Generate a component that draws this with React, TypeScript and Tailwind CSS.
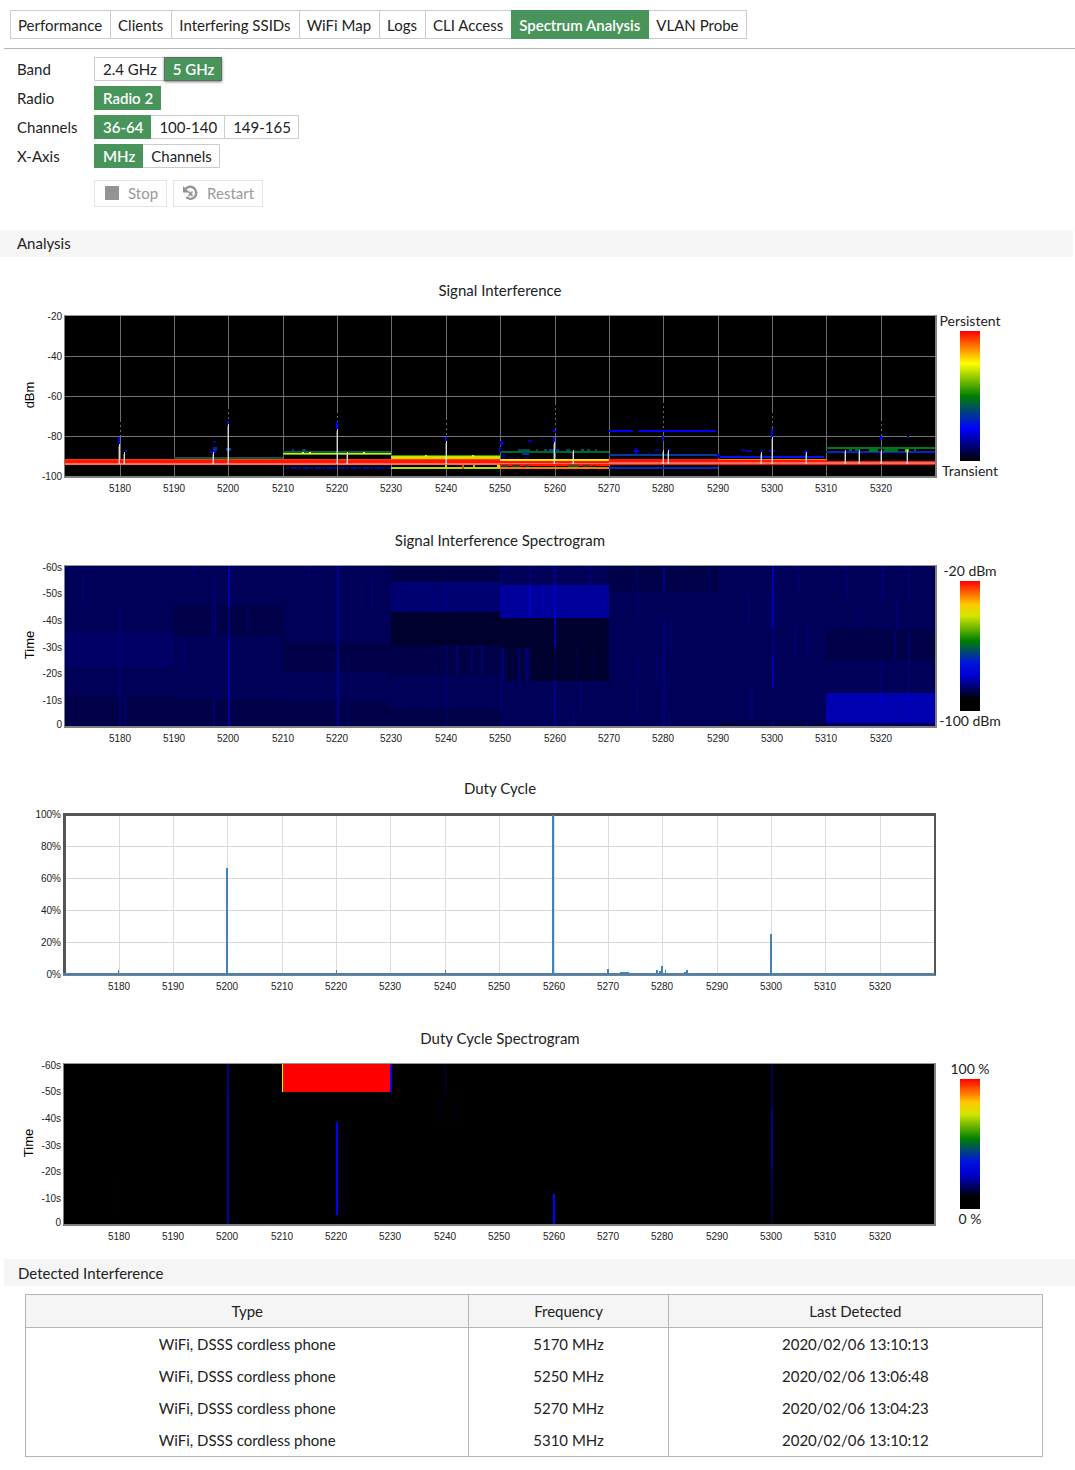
import type { ReactNode } from "react";

const FREQS = [5180, 5190, 5200, 5210, 5220, 5230, 5240, 5250, 5260, 5270, 5280, 5290, 5300, 5310, 5320];
const LEFT = 65;
const RIGHT = 935;
const xOf = (mhz: number) => Math.round(119.5 + (mhz - 5180) * 5.4375);

/* x, y, width, height, colour */
type Block = [number, number, number, number, string];

const Blocks = ({ data }: { data: Block[] }) => (
  <>
    {data.map(([x, y, w, h, fill], i) => (
      <rect key={i} x={x} y={y} width={w} height={h} fill={fill} />
    ))}
  </>
);

const TIMES: [string, number][] = [
  ["-60s", 17], ["-50s", 43], ["-40s", 70], ["-30s", 97], ["-20s", 123], ["-10s", 150], ["0", 174],
];

/* ---------- Signal interference ---------- */
const bands: Block[] = [
  [174, 156, 109, 2, "#0a5a4c"],
  [65, 158, 870, 1, "#ff3c00"],
  [65, 159, 762, 4, "#ff1500"],
  [65, 162, 435, 2, "#ff6a5a"],
  [283, 150, 108, 2, "#00605a"],
  [283, 152, 108, 2, "#c8f000"],
  [283, 153, 108, 1, "#78a000"],
  [391, 154, 109, 2, "#3c8c00"],
  [391, 155, 109, 3, "#d2dc00"],
  [391, 166, 109, 2, "#b4dc00"],
  [500, 150, 109, 2, "#00643c"],
  [500, 158, 109, 2, "#ffe600"],
  [500, 160, 109, 2, "#ff1500"],
  [500, 162, 109, 1, "#ff6a5a"],
  [500, 163, 109, 2, "#ff1500"],
  [500, 166, 109, 2, "#ff7800"],
  [609, 129, 24, 2, "#0000ff"],
  [638, 129, 78, 2, "#0000ff"],
  [609, 153, 109, 2, "#003c9c"],
  [609, 158, 109, 3, "#ff1000"],
  [609, 161, 109, 2, "#ff6a5a"],
  [609, 163, 109, 1, "#ff1500"],
  [609, 166, 109, 2, "#0028c8"],
  [718, 155, 106, 2, "#0014ff"],
  [718, 158, 109, 1, "#ff7800"],
  [718, 161, 109, 2, "#ff6a5a"],
  [718, 163, 109, 1, "#ff1500"],
  [826, 146, 109, 2, "#007818"],
  [826, 150, 109, 2, "#0028c8"],
  [827, 158, 109, 2, "#000000"],
  [827, 160, 109, 1, "#ff1500"],
  [827, 161, 109, 2, "#ff6a5a"],
  [827, 163, 109, 1, "#ff1500"],
];

/* x, top of the white part, top of the blue part */
const spikes: [number, number, number][] = [
  [119, 143, 136], [124, 151, 151], [213, 151, 151], [228, 123, 120], [337, 128, 121],
  [347, 151, 151], [446, 140, 136], [554, 141, 136], [573, 149, 149], [663, 149, 149],
  [668, 149, 149], [761, 151, 151], [772, 136, 128], [806, 151, 149], [845, 149, 149],
  [859, 149, 149], [881, 149, 149], [907, 149, 149],
];

/* x, y, height of the faint transient dots over the grid */
const traces: [number, number, number][] = [
  [120, 121, 15], [228, 108, 12], [337, 112, 8], [446, 119, 16], [555, 104, 30],
  [663, 102, 30], [772, 112, 15], [881, 120, 14],
];

const specks: Block[] = [
  [125, 149, 2, 2, "#0000ff"], [210, 150, 6, 2, "#0000ff"], [213, 146, 4, 4, "#0028b4"],
  [213, 140, 3, 2, "#0000c8"], [226, 147, 5, 3, "#003cb4"], [292, 148, 2, 2, "#003c96"],
  [302, 148, 4, 2, "#004678"], [302, 151, 2, 2, "#ffff00"], [309, 151, 2, 2, "#ffff00"],
  [363, 151, 2, 2, "#ffff00"], [425, 154, 2, 2, "#ffe600"], [472, 154, 2, 2, "#ffe600"],
  [445, 164, 2, 3, "#d2dc00"], [462, 164, 2, 4, "#c86400"], [473, 164, 2, 3, "#d2b400"],
  [497, 164, 3, 3, "#d2dc00"], [500, 140, 3, 4, "#0000ff"], [499, 146, 2, 5, "#0000c8"],
  [502, 153, 3, 5, "#0000a0"], [509, 156, 5, 2, "#000096"], [516, 156, 4, 2, "#0000a0"],
  [522, 151, 7, 3, "#003c78"], [524, 156, 5, 2, "#000096"], [518, 148, 12, 2, "#004a50"],
  [528, 139, 4, 2, "#0000b4"], [536, 148, 2, 2, "#004a50"], [544, 148, 3, 2, "#004a50"],
  [553, 129, 3, 2, "#0000ff"], [549, 148, 10, 2, "#003c96"], [566, 148, 4, 2, "#004a50"],
  [581, 148, 3, 2, "#006432"], [587, 148, 3, 2, "#004a50"], [595, 148, 2, 2, "#004a50"],
  [502, 164, 6, 2, "#004a78"], [512, 164, 8, 2, "#004a50"], [525, 164, 4, 2, "#00508c"],
  [568, 164, 11, 2, "#006432"], [583, 164, 6, 2, "#004a50"], [593, 164, 2, 2, "#004a50"],
  [634, 149, 5, 2, "#0000ff"], [635, 147, 2, 6, "#0000e0"], [648, 151, 2, 2, "#000096"],
  [655, 148, 4, 2, "#000096"], [662, 135, 2, 5, "#0000ff"], [668, 148, 3, 2, "#0000c8"],
  [717, 153, 3, 4, "#0000b4"], [741, 148, 4, 2, "#0000c8"], [746, 149, 6, 2, "#0000a0"],
  [760, 149, 3, 2, "#0000c8"], [769, 149, 6, 2, "#0000c8"], [804, 151, 3, 2, "#0000ff"],
  [880, 135, 2, 4, "#0000ff"], [907, 135, 2, 2, "#0000c8"], [869, 148, 9, 3, "#007828"],
  [884, 148, 14, 3, "#006e28"], [905, 148, 4, 3, "#5ac800"], [914, 148, 2, 2, "#006432"],
  [849, 148, 3, 2, "#006432"], [855, 148, 5, 2, "#006432"],
];

/* ---------- Signal spectrogram ---------- */
const DIM = "#000049";
const LIT = "#00006e";
const DARK = "#00002e";
const signalBlocks: Block[] = [
  [LEFT, 15, 870, 160, "#000058"],
  [65, 82, 109, 33, "#000066"], [65, 145, 109, 30, DIM], [174, 55, 109, 30, DIM],
  [174, 148, 109, 27, DIM], [283, 91, 108, 30, DIM], [283, 151, 108, 24, DIM],
  [391, 15, 109, 16, DIM], [391, 31, 109, 30, "#000072"], [391, 61, 109, 33, DARK],
  [391, 94, 109, 30, DIM], [391, 157, 109, 18, DIM], [500, 34, 109, 33, "#00009c"],
  [500, 67, 109, 30, DARK], [531, 97, 78, 33, DARK], [500, 97, 31, 33, "#000044"],
  [609, 15, 109, 25, DIM], [826, 79, 109, 30, DIM], [718, 170, 108, 5, DIM],
  [826, 142, 109, 30, "#0000b0"],
  [82, 19, 2, 33, LIT], [119, 52, 2, 123, "#000074"], [124, 145, 2, 30, LIT],
  [192, 15, 2, 10, LIT], [213, 25, 3, 30, LIT], [211, 55, 4, 30, "#000062"],
  [215, 55, 1, 30, "#000090"], [213, 85, 2, 60, "#000060"], [213, 148, 2, 27, LIT],
  [247, 55, 2, 30, "#000060"], [184, 85, 2, 33, "#000068"], [228, 15, 2, 40, "#0000b4"],
  [228, 55, 2, 30, "#000080"], [228, 85, 2, 90, "#0000a8"], [308, 15, 2, 13, LIT],
  [337, 15, 2, 160, "#000092"], [361, 28, 1, 29, LIT], [371, 28, 2, 30, "#000078"],
  [347, 151, 2, 24, "#000060"], [446, 31, 1, 30, "#000094"], [446, 94, 1, 81, "#000078"],
  [456, 94, 2, 30, LIT], [471, 94, 2, 30, LIT], [481, 94, 2, 30, LIT],
  [500, 15, 2, 19, LIT], [500, 130, 2, 30, LIT], [529, 15, 2, 19, LIT],
  [529, 34, 2, 33, "#0000c4"], [542, 34, 2, 33, "#0000b0"], [554, 15, 2, 19, "#000090"],
  [554, 34, 2, 33, "#0000c0"], [554, 67, 2, 30, "#0000a8"], [554, 97, 2, 33, DIM],
  [554, 130, 2, 45, "#000094"], [501, 97, 3, 33, "#000078"], [507, 97, 4, 33, DARK],
  [514, 97, 2, 33, DARK], [518, 97, 2, 33, "#000070"], [522, 97, 2, 33, DARK],
  [525, 97, 4, 33, "#000076"], [576, 97, 2, 33, "#000040"], [593, 97, 2, 33, "#000040"],
  [590, 15, 2, 19, LIT], [580, 130, 2, 30, LIT], [573, 160, 2, 15, LIT],
  [636, 15, 2, 25, "#000060"], [638, 40, 1, 30, LIT], [638, 102, 1, 31, LIT],
  [636, 133, 2, 30, LIT], [663, 15, 2, 25, "#000090"], [663, 70, 2, 105, "#000082"],
  [670, 70, 2, 33, LIT], [656, 102, 2, 31, LIT], [668, 162, 2, 13, LIT],
  [684, 15, 1, 25, "#000060"], [708, 15, 2, 25, "#000060"], [689, 70, 1, 33, "#000064"],
  [748, 43, 2, 33, LIT], [772, 15, 2, 61, "#0000b4"], [772, 76, 2, 30, "#00007c"],
  [772, 106, 2, 30, "#0000b4"], [771, 43, 1, 33, "#000080"], [798, 15, 2, 28, LIT],
  [794, 76, 2, 30, LIT], [806, 76, 2, 30, LIT], [801, 43, 1, 33, "#000064"],
  [750, 135, 3, 34, LIT], [746, 106, 1, 30, "#000068"], [762, 170, 1, 5, LIT],
  [772, 170, 2, 5, "#000080"], [806, 170, 2, 5, LIT], [846, 15, 2, 34, LIT],
  [881, 15, 3, 34, "#000074"], [908, 15, 2, 34, LIT], [896, 49, 2, 30, LIT],
  [859, 49, 2, 30, "#000064"], [881, 49, 1, 30, "#000064"], [894, 79, 2, 30, LIT],
  [908, 79, 2, 63, LIT], [880, 109, 2, 33, LIT], [869, 109, 1, 33, "#000064"],
  [893, 109, 1, 33, "#000064"], [881, 142, 1, 30, "#0000c0"], [908, 142, 2, 30, "#0000bc"],
];

/* ---------- Duty cycle spectrogram ---------- */
const dutyBlocks: Block[] = [
  [64, 15, 871, 160, "#000000"],
  [227, 15, 2, 25, "#000080"], [227, 40, 2, 135, "#0000a8"],
  [282, 15, 1, 28, "#ffff00"], [283, 15, 107, 28, "#ff0000"], [390, 15, 2, 28, "#0000ff"],
  [336, 73, 2, 93, "#0000ff"], [445, 16, 1, 30, "#000048"], [553, 145, 2, 30, "#0000ff"],
  [438, 46, 4, 30, "#00000a"], [453, 46, 4, 30, "#00000a"], [119, 130, 1, 30, "#000010"],
  [771, 15, 2, 43, "#000050"], [771, 58, 2, 62, "#000090"], [771, 120, 2, 30, "#000060"],
  [771, 150, 2, 25, "#000040"],
];

const Frame = ({ light }: { light?: boolean }) =>
  light ? (
    <g fill="#555">
      <rect x={64} y={14} width={873} height={3} />
      <rect x={64} y={14} width={3} height={163} />
      <rect x={935} y={14} width={2} height={163} />
    </g>
  ) : (
    <g fill="#808080">
      <rect x={64} y={14} width={873} height={1} fill="#999" />
      <rect x={64} y={14} width={1} height={163} />
      <rect x={935} y={14} width={2} height={163} />
      <rect x={64} y={175} width={873} height={2} />
    </g>
  );

type ChartProps = {
  title: string;
  axis?: string;
  ticks: [string, number][];
  offset?: number;
  legend?: [string, string];
  smooth?: boolean;
  className: string;
  children: ReactNode;
};

function Chart({ title, axis, ticks, offset = 0, legend, smooth, className, children }: ChartProps) {
  return (
    <figure className={`flex ${className}`}>
      <div className="min-w-0 grow">
        <figcaption className="pb-[2px] pl-[60px] text-center text-[15px] leading-[18px]">{title}</figcaption>
        <svg viewBox="0 0 940 200" className="block w-full" role="img" aria-label={title}>
          <g shapeRendering="crispEdges">{children}</g>
          <g fontFamily="'Liberation Sans', Arial, sans-serif" fontSize={10} fill="#222">
            {ticks.map(([label, y]) => (
              <text key={label} x={62 + offset} y={y + 3} textAnchor="end">{label}</text>
            ))}
            {FREQS.map((f) => (
              <text key={f} x={xOf(f) + offset} y={191} textAnchor="middle">{f}</text>
            ))}
            {axis && (
              <text transform={`translate(${34 + offset} 94) rotate(-90)`} textAnchor="middle" fontSize={13} fill="#000">
                {axis}
              </text>
            )}
          </g>
        </svg>
      </div>
      <div className="w-[135px] shrink-0 pt-[30px]">
        {legend && (
          <div className="flex w-[60px] flex-col items-center text-sm leading-5 whitespace-nowrap">
            <span>{legend[0]}</span>
            <div
              className={
                smooth
                  ? "h-[130px] w-5 bg-[linear-gradient(red,yellow_25%,green_50%,blue_75%,black)]"
                  : "h-[130px] w-5 bg-[linear-gradient(red,#ffc800_18%,#d2e600_27%,green_46%,#0014dc_63%,#0000d2_73%,black_91%)]"
              }
            />
            <span>{legend[1]}</span>
          </div>
        )}
      </div>
    </figure>
  );
}

function ButtonGroup({ items, active, raised }: { items: string[]; active: string; raised?: boolean }) {
  return (
    <div className="flex">
      {items.map((item) => (
        <button
          key={item}
          type="button"
          aria-pressed={item === active}
          className={
            "-ml-px h-6 border pr-[7px] pl-2 leading-[22px] first:ml-0 " +
            (item === active
              ? "relative font-semibold text-white bg-[#48945a] " + (raised ? "border-[#5f6b62] shadow-sm shadow-black/40" : "border-[#48945a]")
              : "border-[#ccc] bg-white")
          }
        >
          {item}
        </button>
      ))}
    </div>
  );
}

const TABS = ["Performance", "Clients", "Interfering SSIDs", "WiFi Map", "Logs", "CLI Access", "Spectrum Analysis", "VLAN Probe"];

const SETTINGS = [
  { label: "Band", items: ["2.4 GHz", "5 GHz"], active: "5 GHz", raised: true },
  { label: "Radio", items: ["Radio 2"], active: "Radio 2" },
  { label: "Channels", items: ["36-64", "100-140", "149-165"], active: "36-64" },
  { label: "X-Axis", items: ["MHz", "Channels"], active: "MHz" },
];

const ROWS = [
  ["WiFi, DSSS cordless phone", "5170 MHz", "2020/02/06 13:10:13"],
  ["WiFi, DSSS cordless phone", "5250 MHz", "2020/02/06 13:06:48"],
  ["WiFi, DSSS cordless phone", "5270 MHz", "2020/02/06 13:04:23"],
  ["WiFi, DSSS cordless phone", "5310 MHz", "2020/02/06 13:10:12"],
];

export default function App() {
  return (
    <main className="bg-white pb-[13px] font-[Lato,sans-serif] text-[15px] leading-5 text-[#222]">
      <nav className="ml-1 flex border-b border-[#b4b4b4] pt-[10px] pb-[9px] pl-[6px]">
        {TABS.map((tab) => (
          <button
            key={tab}
            type="button"
            className={
              "-ml-px h-[29px] border pt-px pr-2 pl-[7px] whitespace-nowrap first:ml-0 " +
              (tab === "Spectrum Analysis" ? "relative border-[#48945a] bg-[#48945a] font-semibold text-white" : "border-[#ccc] bg-white")
            }
          >
            {tab}
          </button>
        ))}
      </nav>

      <section className="pt-2 pl-[17px]">
        <div className="flex flex-col gap-[5px]">
          {SETTINGS.map((s) => (
            <div key={s.label} role="group" aria-label={s.label} className="flex items-center">
              <span className="w-[77px]">{s.label}</span>
              <ButtonGroup items={s.items} active={s.active} raised={s.raised} />
            </div>
          ))}
        </div>
        <div className="mt-3 ml-[77px] flex gap-[6px] text-[#999]">
          <button type="button" disabled className="flex h-[27px] items-center gap-[7px] border border-[#e4e4e4] px-2 pb-px">
            <svg viewBox="0 0 18 18" className="size-[18px]" aria-hidden="true">
              <rect x="2" y="2" width="14" height="14" fill="#949494" />
            </svg>
            Stop
          </button>
          <button type="button" disabled className="flex h-[27px] items-center gap-2 border border-[#e4e4e4] px-2 pb-px">
            <svg viewBox="0 0 17 18" className="h-[18px] w-[17px]" fill="none" stroke="#949494" aria-hidden="true">
              <path d="M3 5.500C5 2.500 9 2 11.800 4C14.800 6.200 15 11 12.300 13.300C10 15.300 6.500 15.200 4.200 13.200" strokeWidth="2.400" />
              <path d="M1 2V8.500H7.500Z" fill="#949494" stroke="none" />
              <path d="M6.500 7.500L10.500 12M10.500 7.500L6.500 12" strokeWidth="1.800" />
            </svg>
            Restart
          </button>
        </div>
      </section>

      <h2 className="mt-[23px] mr-[2px] h-[27px] bg-[#f5f5f5] pl-[17px] leading-[27px]">Analysis</h2>

      <Chart
        title="Signal Interference"
        axis="dBm"
        ticks={[["-20", 16], ["-40", 56], ["-60", 96], ["-80", 136], ["-100", 176]]}
        legend={["Persistent", "Transient"]}
        smooth
        className="mt-6"
      >
        <rect x={LEFT} y={15} width={870} height={160} fill="#000" />
        {FREQS.map((f) => (
          <rect key={f} x={xOf(f)} y={15} width={1} height={161} fill="#6c6c6c" />
        ))}
        {[55, 95, 135].map((y) => (
          <rect key={y} x={LEFT} y={y} width={RIGHT - LEFT} height={1} fill="#747474" />
        ))}
        {traces.map(([x, y, h]) => (
          <path key={x} d={`M${x} ${y}v${h}`} stroke="#000" strokeWidth={2} strokeDasharray="3 2" />
        ))}
        <Blocks data={bands} />
        <path d="M286 167H391" stroke="#0000b4" strokeWidth={2} strokeDasharray="3 2 6 1" />
        <Blocks data={specks} />
        {spikes.map(([x, top, blue]) => (
          <g key={x}>
            {blue < top && <rect x={x - 1} y={blue} width={2} height={top - blue} fill="#0000ff" />}
            <rect x={x} y={top} width={1} height={163 - top} fill="#d8d8d8" />
            <rect x={x - 1} y={top + 2} width={1} height={161 - top} fill="#fff" fillOpacity={0.35} />
          </g>
        ))}
        <Frame />
      </Chart>

      <Chart title="Signal Interference Spectrogram" axis="Time" ticks={TIMES} legend={["-20 dBm", "-100 dBm"]} className="mt-[30px]">
        <Blocks data={signalBlocks} />
        <Frame />
      </Chart>

      <Chart
        title="Duty Cycle"
        ticks={[["100%", 16], ["80%", 48], ["60%", 80], ["40%", 112], ["20%", 144], ["0%", 176]]}
        offset={-1}
        className="mt-7"
      >
        <g transform="translate(-1 0)">
          {FREQS.map((f) => (
            <rect key={f} x={xOf(f)} y={15} width={1} height={160} fill="#dcdcdc" />
          ))}
          {[47, 79, 111, 143].map((y) => (
            <rect key={y} x={LEFT} y={y} width={870} height={1} fill="#d8d8d8" />
          ))}
          <Frame light />
          <g fill="#4682b4">
            <rect x={64} y={174} width={872} height={2} />
            <rect x={64} y={176} width={873} height={1} fill="#808080" />
            <rect x={227} y={69} width={2} height={106} />
            <rect x={553} y={16} width={2} height={159} />
            <rect x={771} y={135} width={2} height={40} />
            <path d="M118 175L119.500 171L121 175ZM336 175L337.500 171L339 175ZM445 175L446.500 171L448 175Z" />
            <path d="M608 170H610V175H608ZM621 173H630V175H621ZM657 171H659V175H657ZM660 172H662V167H664V175H660ZM666 171H667V175H666ZM685 173H687V171H689V175H685Z" />
          </g>
        </g>
      </Chart>

      <Chart title="Duty Cycle Spectrogram" axis="Time" ticks={TIMES} offset={-1} legend={["100 %", "0 %"]} className="mt-[30px]">
        <Blocks data={dutyBlocks} />
        <g transform="translate(-1 0)">
          <Frame />
        </g>
      </Chart>

      <h2 className="mt-[10px] ml-1 h-[27px] bg-[#f5f5f5] pl-[14px] leading-[28px]">Detected Interference</h2>

      <div className="mt-2 mr-8 ml-[25px]">
        <table className="w-full table-fixed border-collapse border border-[#b4b4b4] text-center">
          <colgroup>
            <col className="w-[43.6%]" />
            <col className="w-[19.6%]" />
            <col />
          </colgroup>
          <thead className="bg-[#f5f5f5]">
            <tr className="h-[33px]">
              {["Type", "Frequency", "Last Detected"].map((h) => (
                <th key={h} scope="col" className="border border-[#b4b4b4] font-normal">{h}</th>
              ))}
            </tr>
          </thead>
          <tbody>
            {ROWS.map((row) => (
              <tr key={row[1]} className="h-8 last:h-[33px]">
                {row.map((cell) => (
                  <td key={cell} className="border-x border-[#b4b4b4]">{cell}</td>
                ))}
              </tr>
            ))}
          </tbody>
        </table>
      </div>
    </main>
  );
}
